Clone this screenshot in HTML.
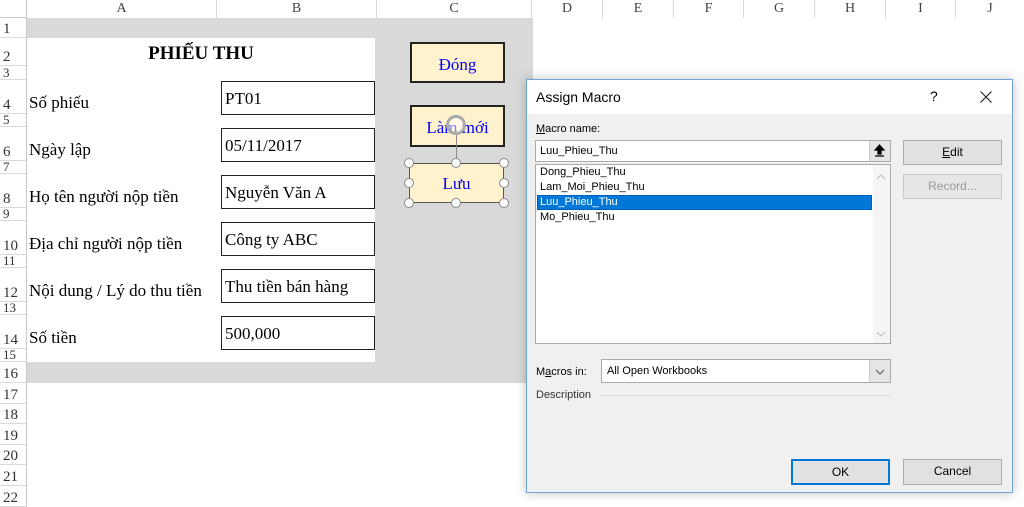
<!DOCTYPE html>
<html><head><meta charset="utf-8"><style>
*{margin:0;padding:0;box-sizing:border-box}
body{width:1024px;height:507px;overflow:hidden;background:#fff;position:relative;font-family:"Liberation Serif",serif}
.a{position:absolute}
.ch{position:absolute;top:0;height:18px;font-size:14px;color:#444;text-align:center;line-height:18px;border-right:1px solid #dadada;background:#fff}
.rh{position:absolute;left:0;width:26px;font-size:15px;color:#333;text-align:left;padding-left:3px;border-bottom:1px solid #dadada;background:#fff;display:flex;align-items:flex-end;line-height:16px}
.lbl{position:absolute;left:29px;font-size:17px;color:#000}
.box{position:absolute;left:221px;width:154px;height:34px;border:1.5px solid #222;background:#fff;font-size:17px;padding:7px 0 0 3px}
.btn{position:absolute;background:#fff2cc;border:2px solid #222;color:#0000ff;font-size:17px;text-align:center}
.d{font-family:"Liberation Sans",sans-serif;font-size:11px;color:#000}
.wb{position:absolute;background:#e1e1e1;border:1px solid #adadad;text-align:center;line-height:23px;font-family:"Liberation Sans",sans-serif;font-size:12px}
.h{position:absolute;width:10px;height:10px;border-radius:50%;background:#fff;border:1.5px solid #888}
</style></head><body>
<div class="a" style="left:0;top:0;width:1024px;height:18px;background:#fff;border-bottom:1px solid #c8c8c8"></div>
<div class="a" style="left:0;top:0;width:27px;height:18px;border-right:1px solid #c8c8c8"></div>
<div class="ch" style="left:27px;width:190px">A</div>
<div class="ch" style="left:217px;width:160px">B</div>
<div class="ch" style="left:377px;width:155px">C</div>
<div class="ch" style="left:532px;width:71px">D</div>
<div class="ch" style="left:603px;width:71px">E</div>
<div class="ch" style="left:674px;width:70px">F</div>
<div class="ch" style="left:744px;width:71px">G</div>
<div class="ch" style="left:815px;width:71px">H</div>
<div class="ch" style="left:886px;width:70px">I</div>
<div class="ch" style="left:956px;width:68px;border-right:none">J</div>
<div class="a" style="left:26px;top:18px;width:1px;height:489px;background:#c8c8c8"></div>
<div class="rh" style="top:18px;height:20px">1</div>
<div class="rh" style="top:38px;height:28px">2</div>
<div class="rh" style="top:66px;height:14px;font-size:13px;line-height:12px">3</div>
<div class="rh" style="top:80px;height:34px">4</div>
<div class="rh" style="top:114px;height:13px;font-size:13px;line-height:12px">5</div>
<div class="rh" style="top:127px;height:34px">6</div>
<div class="rh" style="top:161px;height:13px;font-size:13px;line-height:12px">7</div>
<div class="rh" style="top:174px;height:34px">8</div>
<div class="rh" style="top:208px;height:13px;font-size:13px;line-height:12px">9</div>
<div class="rh" style="top:221px;height:34px">10</div>
<div class="rh" style="top:255px;height:13px;font-size:13px;line-height:12px">11</div>
<div class="rh" style="top:268px;height:34px">12</div>
<div class="rh" style="top:302px;height:13px;font-size:13px;line-height:12px">13</div>
<div class="rh" style="top:315px;height:34px">14</div>
<div class="rh" style="top:349px;height:13px;font-size:13px;line-height:12px">15</div>
<div class="rh" style="top:362px;height:21px">16</div>
<div class="rh" style="top:383px;height:21px">17</div>
<div class="rh" style="top:404px;height:20px">18</div>
<div class="rh" style="top:424px;height:21px">19</div>
<div class="rh" style="top:445px;height:20px">20</div>
<div class="rh" style="top:465px;height:21px">21</div>
<div class="rh" style="top:486px;height:21px">22</div>
<div class="a" style="left:27px;top:18px;width:506px;height:365px;background:#d9d9d9"></div>
<div class="a" style="left:27px;top:38px;width:348px;height:324px;background:#fff"></div>
<div class="a" style="left:27px;top:43px;width:348px;text-align:center;font-weight:bold;font-size:19px">PHIẾU THU</div>
<div class="lbl" style="top:93px">Số phiếu</div>
<div class="lbl" style="top:140px">Ngày lập</div>
<div class="lbl" style="top:187px">Họ tên người nộp tiền</div>
<div class="lbl" style="top:234px">Địa chỉ người nộp tiền</div>
<div class="lbl" style="top:281px">Nội dung / Lý do thu tiền</div>
<div class="lbl" style="top:328px">Số tiền</div>
<div class="box" style="top:81px">PT01</div>
<div class="box" style="top:128px">05/11/2017</div>
<div class="box" style="top:175px">Nguyễn Văn A</div>
<div class="box" style="top:222px">Công ty ABC</div>
<div class="box" style="top:269px">Thu tiền bán hàng</div>
<div class="box" style="top:316px">500,000</div>
<div class="btn" style="left:410px;top:42px;width:95px;height:41px;line-height:42px">Đóng</div>
<div class="btn" style="left:410px;top:105px;width:95px;height:42px;line-height:42px">Làm mới</div>
<div class="a" style="left:456px;top:130px;width:1px;height:33px;background:#888"></div>
<div class="a" style="left:446px;top:115px;width:20px;height:20px;border-radius:50%;border:3px solid #aaa;background:rgba(255,255,255,.5)"></div>
<div class="btn" style="left:409px;top:163px;width:95px;height:40px;line-height:40px;border:1.5px solid #555">Lưu</div>
<div class="h" style="left:404px;top:158px"></div><div class="h" style="left:451px;top:158px"></div><div class="h" style="left:499px;top:158px"></div>
<div class="h" style="left:404px;top:178px"></div><div class="h" style="left:499px;top:178px"></div>
<div class="h" style="left:404px;top:198px"></div><div class="h" style="left:451px;top:198px"></div><div class="h" style="left:499px;top:198px"></div>
<div class="a" style="left:526px;top:79px;width:487px;height:414px;background:#f0f0f0;border:1px solid #6fa6d9;box-shadow:0 0 10px rgba(0,0,0,.25)">
 <div class="a" style="left:0;top:0;width:485px;height:34px;background:#fff"></div>
 <div class="a" style="left:9px;top:9px;font-family:'Liberation Sans',sans-serif;font-size:14px">Assign Macro</div>
 <div class="a" style="left:403px;top:8px;font-family:'Liberation Sans',sans-serif;font-size:14px">?</div>
 <svg class="a" style="left:453px;top:11px" width="12" height="12"><path d="M0.5 0.5L11.5 11.5M11.5 0.5L0.5 11.5" stroke="#222" stroke-width="1.2"/></svg>
 <div class="a d" style="left:9px;top:43px"><u>M</u>acro name:</div>
 <div class="a" style="left:8px;top:60px;width:356px;height:22px;background:#fff;border:1px solid #aaa"></div>
 <div class="a d" style="left:13px;top:65px">Luu_Phieu_Thu</div>
 <div class="a" style="left:342px;top:61px;width:21px;height:20px;background:#e5e5e5;border-left:1px solid #ccc"></div>
 <svg class="a" style="left:347px;top:64px" width="11" height="14"><path d="M5.5 1L1 6H4V10H7V6H10Z M1 12H10" fill="#000" stroke="#000" stroke-width="1.2"/></svg>
 <div class="a" style="left:8px;top:84px;width:356px;height:180px;background:#fff;border:1px solid #aaa"></div>
 <div class="a d" style="left:13px;top:86px">Dong_Phieu_Thu</div>
 <div class="a d" style="left:13px;top:101px">Lam_Moi_Phieu_Thu</div>
 <div class="a" style="left:10px;top:115px;width:335px;height:15px;background:#0078d7;border:1px dotted #333"></div>
 <div class="a d" style="left:13px;top:116px;color:#fff">Luu_Phieu_Thu</div>
 <div class="a d" style="left:13px;top:131px">Mo_Phieu_Thu</div>
 <div class="a" style="left:346px;top:85px;width:17px;height:178px;background:#f5f5f5"></div>
 <svg class="a" style="left:349px;top:94px" width="10" height="6"><path d="M1 5L5 1L9 5" fill="none" stroke="#bbb"/></svg>
 <svg class="a" style="left:349px;top:251px" width="10" height="6"><path d="M1 1L5 5L9 1" fill="none" stroke="#bbb"/></svg>
 <div class="wb" style="left:376px;top:60px;width:99px;height:25px"><u>E</u>dit</div>
 <div class="wb" style="left:376px;top:94px;width:99px;height:25px;color:#999;background:#e6e6e6;border-color:#c8c8c8">Record...</div>
 <div class="a d" style="left:9px;top:286px">M<u>a</u>cros in:</div>
 <div class="a" style="left:74px;top:279px;width:290px;height:24px;background:#fff;border:1px solid #aaa"></div>
 <div class="a d" style="left:80px;top:285px">All Open Workbooks</div>
 <div class="a" style="left:342px;top:280px;width:21px;height:22px;background:#e5e5e5;border-left:1px solid #ccc"></div>
 <svg class="a" style="left:348px;top:289px" width="10" height="6"><path d="M1 1L5 5L9 1" fill="none" stroke="#555"/></svg>
 <div class="a d" style="left:9px;top:309px;color:#333">Description</div>
 <div class="a" style="left:72px;top:315px;width:292px;height:1px;background:#ddd"></div>
 <div class="wb" style="left:264px;top:379px;width:99px;height:26px;border:2px solid #0078d7">OK</div>
 <div class="wb" style="left:376px;top:379px;width:99px;height:26px">Cancel</div>
</div>
</body></html>
